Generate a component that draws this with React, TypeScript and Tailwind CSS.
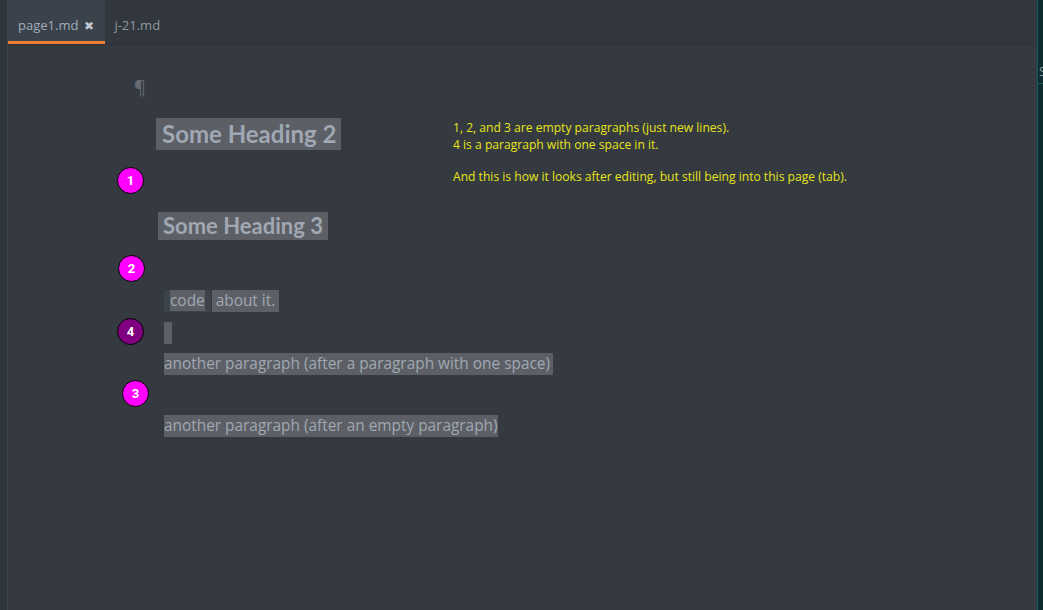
import React from 'react';

// badge positions relative to the editor body (page minus gutter and 45px tab bar)
const badges = [
  { n: '1', top: 122, left: 109, bg: 'bg-[#ff00ff]' },
  { n: '2', top: 210, left: 110, bg: 'bg-[#ff00ff]' },
  { n: '4', top: 273, left: 109, bg: 'bg-[#800080]' },
  { n: '3', top: 335, left: 114, bg: 'bg-[#ff00ff]' },
];

const Badge: React.FC<{ n: string; top: number; left: number; bg: string }> = ({ n, top, left, bg }) => (
  <div
    className={`absolute flex h-[27px] w-[27px] items-center justify-center rounded-full border border-black text-[13px] font-bold text-white ${bg}`}
    style={{ top, left, fontFamily: 'Roboto, sans-serif' }}
  >
    {n}
  </div>
);

export default function App() {
  return (
    <div className="flex h-[610px] w-[1043px] overflow-hidden bg-[#353940]" style={{ fontFamily: '"Open Sans", sans-serif' }}>
      {/* left gutter */}
      <div className="w-[8px] shrink-0 border-r border-[#404751] bg-[#2e353d]" />

      {/* editor */}
      <div className="flex min-w-0 flex-1 flex-col">
        <div className="flex h-[45px] shrink-0 items-stretch border-b border-[#2e3238] bg-[#32363d]">
          <div className="flex items-center gap-[6px] border-b-[3px] border-[#f07f35] bg-[#3a424b] pl-[10px] pr-[11px] pt-[10px] text-[13px] text-[#a3acb8]">
            <span>page1.md</span>
            <span className="text-[12px] text-[#c2c8d0]">✖</span>
          </div>
          <div className="flex items-center px-[9px] pt-[7px] text-[13px] text-[#8e99a6]">j-21.md</div>
        </div>

        <div className="relative flex-1">
          <div className="absolute left-[126px] top-[29px] text-[18px] text-[#666c74]">¶</div>

          <div className="flex flex-col pl-[148px] pt-[73px] text-[#a0a8b3]">
            <div className="self-start bg-[#5c5f65] pl-[6px] pr-[5px] text-[24px] font-bold leading-[32px]" style={{ fontFamily: 'Lato, sans-serif' }}>
              Some Heading 2
            </div>

            <div className="ml-[2px] mt-[62px] self-start bg-[#5c5f65] px-[5px] text-[22px] font-bold leading-[28px]" style={{ fontFamily: 'Lato, sans-serif' }}>
              Some Heading 3
            </div>

            <div className="ml-[8px] mt-[50px] flex h-[22px] items-stretch text-[15.4px] leading-[22px]">
              <span className="rounded-[3px] bg-[#3d434b] px-[6px]">
                <span className="bg-[#5c5f65]">code</span>
              </span>
              <span className="ml-[1px] bg-[#5c5f65] px-[4px]">about it.</span>
            </div>

            <div className="ml-[8px] mt-[10px] h-[22px] w-[8px] bg-[#5c5f65]" />

            <div className="ml-[8px] mt-[9px] self-start bg-[#5c5f65] pr-[3px] text-[15.4px] leading-[22px]">
              another paragraph (after a paragraph with one space)
            </div>

            <div className="ml-[8px] mt-[40px] self-start bg-[#5c5f65] text-[15.4px] leading-[22px]">
              another paragraph (after an empty paragraph)
            </div>
          </div>

          {badges.map((b) => (
            <Badge key={b.n} {...b} />
          ))}

          <div className="absolute left-[445px] top-[74px] text-[12.1px] leading-[17px] text-[#e6e619]">
            <div>1, 2, and 3 are empty paragraphs (just new lines).</div>
            <div>4 is a paragraph with one space in it.</div>
            <div className="mt-[15px]">And this is how it looks after editing, but still being into this page (tab).</div>
          </div>
        </div>
      </div>

      {/* right panel */}
      <div className="relative w-[6px] shrink-0 border-l border-[#0f5e58] bg-[#0f2b2f]">
        <div className="absolute left-[1px] top-[62px] text-[13px] text-[#7f9aa0]">S</div>
        <div className="absolute left-0 right-0 top-[83px] h-px bg-[#0f5e58]" />
      </div>
    </div>
  );
}
